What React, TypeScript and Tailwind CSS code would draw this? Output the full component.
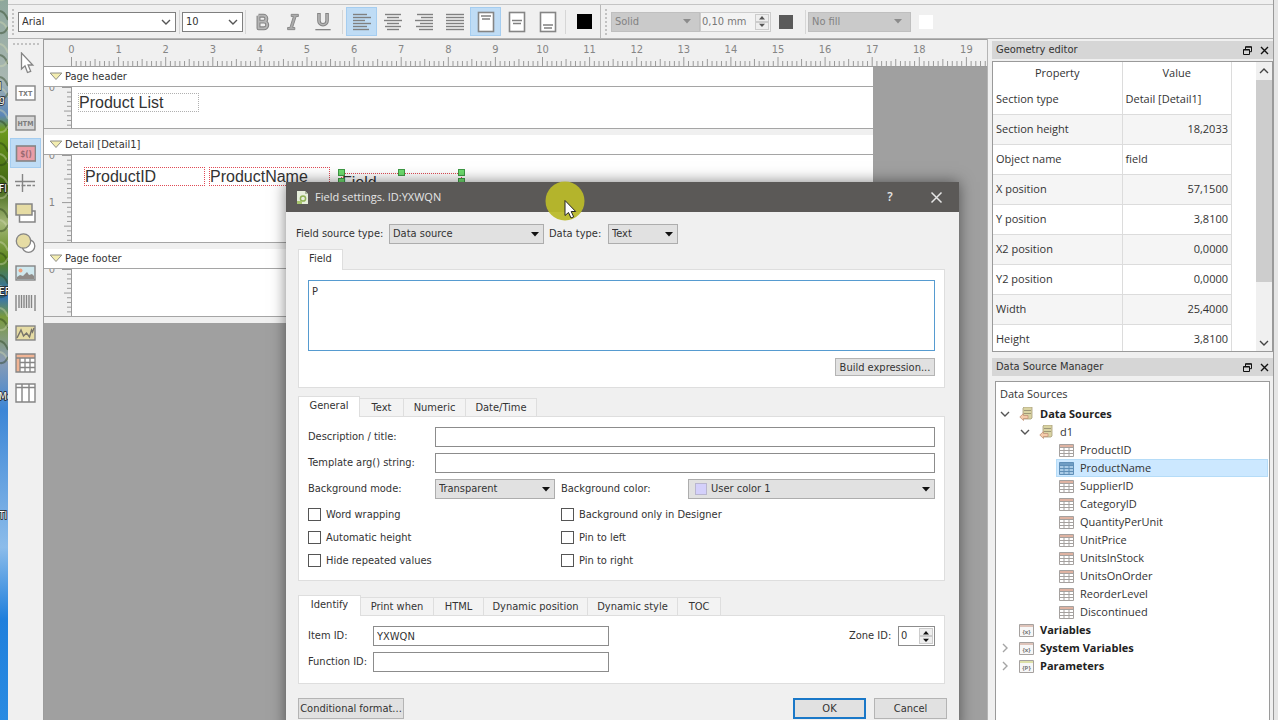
import React, { useState } from 'react';
import { clsx } from 'clsx';

const CM = 47.1;

/* ---------- shared bits ---------- */

function Arrow({ className }: { className?: string }) {
  return (
    <svg viewBox="0 0 8 5" className={clsx('w-2 h-[5px]', className)} fill="currentColor">
      <path d="M0 0h8L4 4.6z" />
    </svg>
  );
}

function Chevron({ className }: { className?: string }) {
  return (
    <svg viewBox="0 0 10 6" className={clsx('w-[10px] h-[6px]', className)} fill="none" stroke="currentColor" strokeWidth="1.4">
      <path d="M1 1l4 4 4-4" />
    </svg>
  );
}

interface SelectBoxProps {
  id?: string;
  label?: string;
  value: string;
  className?: string;
  tone?: 'button' | 'edit' | 'disabled';
  swatch?: boolean;
}

function SelectBox({ id, label, value, className, tone = 'button', swatch }: SelectBoxProps) {
  return (
    <div className={clsx('grid items-center h-5', className)}>
      <select
        id={id}
        aria-label={label}
        disabled={tone === 'disabled'}
        className={clsx(
          'col-start-1 row-start-1 w-full h-full appearance-none border rounded-none outline-none opacity-100',
          swatch ? 'pl-[22px]' : 'pl-[3px]',
          tone === 'button' && 'bg-[#e1e1e1] border-[#adadad]',
          tone === 'edit' && 'bg-white border-[#7f7f7f]',
          tone === 'disabled' && 'bg-[#cacaca] border-[#bfbfbf] text-[#828282]'
        )}
      >
        <option>{value}</option>
      </select>
      {swatch && <span className="col-start-1 row-start-1 ml-[7px] w-3 h-3 bg-[#d4d0fb] border border-[#b9b6cf] pointer-events-none" />}
      <span className="col-start-1 row-start-1 justify-self-end mr-[5px] pointer-events-none">
        {tone === 'edit' ? <Chevron className="text-[#555]" /> : <Arrow className={tone === 'disabled' ? 'mr-1 text-[#8b8b8b]' : 'text-[#111]'} />}
      </span>
    </div>
  );
}

function SpinButtons({ disabled }: { disabled?: boolean }) {
  return (
    <div className={clsx('flex flex-col w-[14px] m-px', disabled ? 'text-[#555]' : 'text-[#111]')}>
      <button aria-label="Increase" className="flex-1 flex items-center justify-center bg-[#eee] border border-[#ccc]">
        <Arrow className="w-[6px] h-1 rotate-180" />
      </button>
      <button aria-label="Decrease" className="flex-1 flex items-center justify-center bg-[#eee] border border-[#ccc]">
        <Arrow className="w-[6px] h-1" />
      </button>
    </div>
  );
}

/* ---------- top toolbar ---------- */

function Separator() {
  return <span className="w-px h-6 bg-[#d6d6d6] shrink-0" />;
}

function Lines({ rows }: { rows: number[][] }) {
  return (
    <svg viewBox="0 0 18 18" className="w-[18px] h-[18px]" stroke="#808080" strokeWidth="1.4">
      {rows.map(([a, b], i) => (
        <line key={i} x1={a} x2={b} y1={1.5 + i * 3} y2={1.5 + i * 3} />
      ))}
    </svg>
  );
}

function PageAlign({ y }: { y: number }) {
  return (
    <svg viewBox="0 0 18 22" className="w-[18px] h-[22px]">
      <rect x="1.5" y="1.5" width="15" height="19" fill="#fff" stroke="#858585" strokeWidth="1.6" />
      <path d={`M4 ${y}h10M5 ${y + 3}h8`} stroke="#808080" strokeWidth="1.3" />
    </svg>
  );
}

function ToolButton({ label, active, children }: { label: string; active?: boolean; children: React.ReactNode }) {
  return (
    <button
      aria-label={label}
      aria-pressed={!!active}
      className={clsx('min-w-[30px] h-[29px] px-[5px] flex items-center justify-center border', active ? 'bg-[#bfdcf5] border-[#a5cdf0]' : 'border-transparent')}
    >
      {children}
    </button>
  );
}

function Glyph({ d }: { d: string }) {
  return (
    <svg viewBox="0 0 20 22" className="w-[18px] h-[22px]" fill="none" strokeLinejoin="round">
      <path d={d} stroke="#858585" strokeWidth="4.4" />
      <path d={d} stroke="#b5b5b5" strokeWidth="2" />
    </svg>
  );
}

function Handle() {
  return <span className="w-0 h-[26px] border-l-2 border-dotted border-[#c2c2c2] shrink-0" />;
}

function Toolbar() {
  return (
    <div className="h-[34px] shrink-0 flex items-center bg-[#f0f0f0] border-b border-[#b4b4b4] pl-1">
      <Handle />
      <SelectBox label="Font" value="Arial" tone="edit" className="ml-1 w-[158px]" />
      <span className="w-[3px]" />
      <Separator />
      <SelectBox label="Font size" value="10" tone="edit" className="ml-[2px] w-[61px]" />
      <span className="w-[2px]" />
      <Separator />
      <span className="w-[2px]" />
      <ToolButton label="Bold">
        <Glyph d="M5 4v14h6a3.6 3.6 0 0 0 0-7.4H5M5 4h5.4a3.3 3.3 0 0 1 0 6.6" />
      </ToolButton>
      <ToolButton label="Italic">
        <svg viewBox="0 0 20 22" className="w-[18px] h-[22px]" fill="#ababab" stroke="#858585">
          <path d="M8 2.5h8v2.4h-2.5L9.6 17.1H12v2.4H4v-2.4h2.6l3.8-12.2H8z" />
        </svg>
      </ToolButton>
      <ToolButton label="Underline">
        <svg viewBox="0 0 20 22" className="w-[18px] h-[22px]" fill="none">
          <path d="M5.5 1v8.500a4.500 4.500 0 0 0 9 0V1" stroke="#858585" strokeWidth="4" />
          <path d="M5.500 2v7.500a4.500 4.500 0 0 0 9 0V2" stroke="#b5b5b5" strokeWidth="1.800" />
          <path d="M1.500 19.500h17" stroke="#858585" strokeWidth="1.500" />
        </svg>
      </ToolButton>
      <span className="w-1" />
      <Separator />
      <span className="w-[3px]" />
      <div className="grid grid-cols-[repeat(7,31px)]">
        <ToolButton label="Align left" active>
          <Lines rows={[[0, 14], [0, 18], [0, 12], [0, 18], [0, 14], [0, 16]]} />
        </ToolButton>
        <ToolButton label="Align center">
          <Lines rows={[[1, 17], [3, 15], [0, 18], [3, 15], [1, 17], [3, 15]]} />
        </ToolButton>
        <ToolButton label="Align right">
          <Lines rows={[[2, 18], [6, 18], [0, 18], [5, 18], [1, 18], [4, 18]]} />
        </ToolButton>
        <ToolButton label="Justify">
          <Lines rows={[[0, 18], [0, 18], [0, 18], [0, 18], [0, 18], [0, 18]]} />
        </ToolButton>
        <ToolButton label="Align top" active>
          <PageAlign y={5} />
        </ToolButton>
        <ToolButton label="Align middle">
          <PageAlign y={9.5} />
        </ToolButton>
        <ToolButton label="Align bottom">
          <PageAlign y={14} />
        </ToolButton>
      </div>
      <span className="w-[2px]" />
      <Separator />
      <button aria-label="Text color" className="ml-[11px] w-[15px] h-[15px] bg-black" />
      <span className="ml-2 w-px h-full bg-[#b9b9b9]" />
      <span className="w-1" />
      <Handle />
      <SelectBox label="Line style" value="Solid" tone="disabled" className="ml-1 w-[89px]" />
      <div className="flex w-[71px] h-5 bg-[#f3f3f3] border border-[#ccc]">
        <input aria-label="Line width" disabled defaultValue="0,10 mm" className="min-w-0 flex-1 pl-px text-[#777]" />
        <SpinButtons disabled />
      </div>
      <button aria-label="Line color" className="ml-2 w-[14px] h-[14px] bg-[#5a5a5a]" />
      <span className="w-3" />
      <Separator />
      <SelectBox label="Fill style" value="No fill" tone="disabled" className="ml-[2px] w-[103px]" />
      <button aria-label="Fill color" className="ml-2 w-[14px] h-[14px] bg-white" />
    </div>
  );
}

/* ---------- left tool strip ---------- */

const G = '#858585';

const TOOLS: { name: string; icon: React.ReactNode }[] = [
  { name: 'Select', icon: <path d="M6.500 1v16l3.500-3.200 2.500 6.700 3.200-1.200-2.600-6.300h4.700z" fill="#fff" stroke={G} strokeWidth="1.300" /> },
  {
    name: 'Text',
    icon: (
      <>
        <rect x="1" y="4" width="19" height="14" fill="#fff" stroke={G} strokeWidth="1.4" />
        <text x="10.500" y="14" textAnchor="middle" fontSize="7" fontWeight="bold" fill="#7b7b7b">TXT</text>
      </>
    ),
  },
  {
    name: 'HTML',
    icon: (
      <>
        <rect x="1" y="4" width="19" height="14" fill="#d6d6d6" stroke={G} strokeWidth="1.4" />
        <text x="10.500" y="14" textAnchor="middle" fontSize="7" fontWeight="bold" fill="#7b7b7b">HTM</text>
      </>
    ),
  },
  {
    name: 'Field',
    icon: (
      <>
        <rect x="1.500" y="4" width="19" height="15" fill="#ea9ca6" stroke={G} strokeWidth="1.6" />
        <text x="11" y="14.500" textAnchor="middle" fontSize="8" fontWeight="bold" fill="#9a6a72">$()</text>
      </>
    ),
  },
  {
    name: 'Line',
    icon: (
      <g stroke={G} strokeWidth="1.4">
        <path d="M7.500 2v18M0 9.500h20" />
        <path d="M1 13.500h19" strokeDasharray="4 1.500" />
      </g>
    ),
  },
  {
    name: 'Rectangle',
    icon: (
      <g stroke={G} strokeWidth="1.5">
        <rect x="4.500" y="9" width="15.500" height="11" fill="#fff" />
        <rect x="1" y="2" width="16" height="11" fill="#e6dca4" />
      </g>
    ),
  },
  {
    name: 'Ellipse',
    icon: (
      <g stroke={G} strokeWidth="1.3">
        <circle cx="13.500" cy="14" r="6.300" fill="#fff" />
        <circle cx="8.500" cy="9" r="7.200" fill="#e6dca4" />
      </g>
    ),
  },
  {
    name: 'Picture',
    icon: (
      <>
        <rect x="1" y="4" width="19" height="14" fill="#cfe8ee" stroke={G} strokeWidth="1.4" />
        <circle cx="5.500" cy="8.500" r="2" fill="#f0a07c" />
        <path d="M2 17v-2l3-2 3 1 4-4 2 3 3-1 2 2v3z" fill="#8f8b88" />
      </>
    ),
  },
  {
    name: 'Barcode',
    icon: <path d="M1 3v16M4 3v13M6.500 3v13M9 3v13M11.500 3v13M14 3v13M16.500 3v13M20 3v16" stroke={G} strokeWidth="1.4" />,
  },
  {
    name: 'Chart',
    icon: (
      <>
        <rect x="1" y="4" width="19" height="14" fill="#e6dca4" stroke={G} strokeWidth="1.4" />
        <path d="M2 16l4-8 2.500 6 3-3 3 4 2-7 1 2 1.500-4" fill="none" stroke="#77736a" strokeWidth="1.4" />
      </>
    ),
  },
  {
    name: 'Table',
    icon: (
      <>
        <rect x="1" y="2" width="19" height="18" fill="#fff" />
        <path d="M1 2h19v4H1zM1 6h4v14H1z" fill="#f1b494" />
        <path d="M1 2h19v18H1zM1 6h19M5 6v14M10 6v14M15 6v14M5 10.500h15M5 15.500h15" fill="none" stroke={G} strokeWidth="1.300" />
      </>
    ),
  },
  {
    name: 'Columns',
    icon: <path d="M1 2h19v18H1zM1 5.500h19M7 2v18M14 2v18" fill="#fff" stroke={G} strokeWidth="1.4" />,
  },
];

function ToolStrip() {
  return (
    <div className="w-[35px] shrink-0 bg-[#f0f0f0] pt-1 flex flex-col items-center">
      <span className="w-[26px] border-t-2 border-dotted border-[#c2c2c2] mb-[3px]" />
      {TOOLS.map((tool) => (
        <button
          key={tool.name}
          aria-label={tool.name}
          className={clsx('w-[31px] h-[30px] flex items-center justify-center border', tool.name === 'Field' ? 'bg-[#bfdcf5] border-[#a5cdf0]' : 'border-transparent')}
        >
          <svg viewBox="0 0 21 22" className="w-[21px] h-[22px]">{tool.icon}</svg>
        </button>
      ))}
    </div>
  );
}

/* ---------- report canvas ---------- */

function HorizontalRuler() {
  const ticks = Array.from({ length: 195 }, (_, i) => i);
  return (
    <svg className="block w-full h-[27px] shrink-0 bg-[#f0f0f0] border-b border-[#9c9c9c]">
      {ticks.map((i) => {
        const len = i % 10 === 0 ? 9 : i % 5 === 0 ? 7 : 5;
        const x = 27.5 + (i * CM) / 10;
        return <line key={i} x1={x} x2={x} y1={26 - len} y2={26} stroke="#9a9a9a" />;
      })}
      {ticks.filter((i) => i % 10 === 0).map((i) => (
        <text key={i} x={27.5 + (i * CM) / 10} y="13" textAnchor="middle" fontSize="11" fill="#858585">{i / 10}</text>
      ))}
    </svg>
  );
}

function VerticalRuler({ mm }: { mm: number }) {
  return (
    <svg className="w-7 h-full shrink-0 bg-[#f0f0f0] border-r border-[#9a9a9a]">
      {Array.from({ length: mm }, (_, i) => {
        const len = i % 10 === 0 ? 9 : i % 5 === 0 ? 7 : 4;
        const y = 0.5 + (i * CM) / 10;
        return <line key={i} x1={27 - len} x2={27} y1={y} y2={y} stroke="#9a9a9a" />;
      })}
      <text x="8" y="4" textAnchor="middle" fontSize="11" fill="#858585">0</text>
      {mm > 10 && <text x="8" y="51" textAnchor="middle" fontSize="11" fill="#858585">1</text>}
    </svg>
  );
}

interface SectionProps {
  title: string;
  mm: number;
  bodyClass: string;
  children?: React.ReactNode;
}

function Section({ title, mm, bodyClass, children }: SectionProps) {
  return (
    <section className="w-[829px] border-b-[6px] border-[#f0f0f0]">
      <h2 className="h-5 flex items-center gap-[2px] pl-[5px] bg-white border-b border-[#a5a5a5] font-normal">
        <svg viewBox="0 0 14 9" className="w-[14px] h-[9px]">
          <path d="M1.200 1h11.600L7 7.500z" fill="#f3edb0" stroke="#8f8f88" />
        </svg>
        {title}
      </h2>
      <div className={clsx('flex bg-white border-b border-[#a5a5a5]', bodyClass)}>
        <VerticalRuler mm={mm} />
        <div className="relative flex-1 font-['Liberation_Sans',Arial,sans-serif] text-base leading-[18px] text-[#333]">{children}</div>
      </div>
    </section>
  );
}

const HANDLES = ['left-[266px] top-[14px]', 'left-[326px] top-[14px]', 'left-[386px] top-[14px]', 'left-[266px] top-[23px]', 'left-[386px] top-[23px]'];

function Canvas() {
  return (
    <main className="flex-1 min-w-0 flex flex-col bg-[#a0a0a0] border-l border-t border-[#9c9c9c]">
      <HorizontalRuler />
      <Section title="Page header" mm={9} bodyClass="h-[42px]">
        <div className="absolute left-[6px] top-[6px] w-[121px] h-[19px] border border-dotted border-[#b0b0b0]">Product List</div>
      </Section>
      <Section title="Detail [Detail1]" mm={19} bodyClass="h-[88px]">
        <div className="absolute left-3 top-3 w-[121px] h-[19px] border border-dotted border-[#e04a55]">ProductID</div>
        <div className="absolute left-[137px] top-3 w-[121px] h-[19px] border border-dotted border-[#e04a55]">ProductName</div>
        <div className="absolute left-[269px] top-[18px] w-[121px] h-[19px] border border-dotted border-[#e04a55]">Field</div>
        {HANDLES.map((pos) => (
          <span key={pos} className={clsx('absolute w-[7px] h-[7px] bg-[#6ddc6d] border border-[#3f9a45]', pos)} />
        ))}
      </Section>
      <Section title="Page footer" mm={10} bodyClass="h-12" />
    </main>
  );
}

/* ---------- right docks ---------- */

function DockHeader({ title }: { title: string }) {
  return (
    <h2 className="h-[18px] shrink-0 flex items-center bg-[#d6d6d6] pl-1 pr-1 font-normal font-['DejaVu_Sans_Condensed','DejaVu_Sans',sans-serif] text-[#333]">
      <span className="flex-1">{title}</span>
      <button aria-label={`Float ${title}`} className="mr-2">
        <svg viewBox="0 0 9 9" className="w-[9px] h-[9px]" fill="none" stroke="#111">
          <path d="M2.500 3V.7h6v5H6.500M2.500 1.200h6M.5 3.500h6v5h-6zM.5 4h6" />
        </svg>
      </button>
      <button aria-label={`Close ${title}`}>
        <svg viewBox="0 0 9 9" className="w-[9px] h-[9px]" stroke="#111" strokeWidth="1.4">
          <path d="M1 1l7 7M8 1L1 8" />
        </svg>
      </button>
    </h2>
  );
}

const GEOMETRY = [
  { name: 'Section type', value: 'Detail [Detail1]', text: true },
  { name: 'Section height', value: '18,2033' },
  { name: 'Object name', value: 'field', text: true },
  { name: 'X position', value: '57,1500' },
  { name: 'Y position', value: '3,8100' },
  { name: 'X2 position', value: '0,0000' },
  { name: 'Y2 position', value: '0,0000' },
  { name: 'Width', value: '25,4000' },
  { name: 'Height', value: '3,8100' },
];

function GeometryEditor() {
  return (
    <section className="mb-[6px]">
      <DockHeader title="Geometry editor" />
      <div className="mt-[2px] h-[291px] flex bg-white border border-[#9a9a9a] overflow-hidden">
        <table className="w-[239px] h-fit border-collapse text-[#333]">
          <thead>
            <tr className="h-[22px]">
              <th className="w-[129px] font-normal border-r border-[#dcdcdc]">Property</th>
              <th className="font-normal border-r border-[#dcdcdc]">Value</th>
            </tr>
          </thead>
          <tbody>
            {GEOMETRY.map((row, i) => (
              <tr key={row.name} className={clsx('h-[30px] border-b border-[#dcdcdc]', i % 2 === 1 && 'bg-[#f5f5f5]')}>
                <td className="pl-[3px] border-r border-[#dcdcdc]">{row.name}</td>
                <td className={clsx('px-[3px] border-r border-[#dcdcdc]', !row.text && 'text-right')}>{row.value}</td>
              </tr>
            ))}
          </tbody>
        </table>
        <div className="ml-auto w-4 bg-[#f0f0f0] flex flex-col items-center">
          <Chevron className="my-[6px] rotate-180 shrink-0 text-[#444]" />
          <span className="w-full h-[202px] bg-[#cdcdcd]" />
          <Chevron className="mt-auto mb-[5px] text-[#444]" />
        </div>
      </div>
    </section>
  );
}

interface TreeNode {
  label: string;
  level: 0 | 1 | 2;
  icon: 'source' | 'table' | 'var' | 'param';
  open?: boolean;
  closed?: boolean;
}

const FIELDS = ['ProductID', 'ProductName', 'SupplierID', 'CategoryID', 'QuantityPerUnit', 'UnitPrice', 'UnitsInStock', 'UnitsOnOrder', 'ReorderLevel', 'Discontinued'];

const TREE: TreeNode[] = [
  { label: 'Data Sources', level: 0, icon: 'source', open: true },
  { label: 'd1', level: 1, icon: 'source', open: true },
  ...FIELDS.map((label): TreeNode => ({ label, level: 2, icon: 'table' })),
  { label: 'Variables', level: 0, icon: 'var' },
  { label: 'System Variables', level: 0, icon: 'var', closed: true },
  { label: 'Parameters', level: 0, icon: 'param', closed: true },
];

const INDENT = ['pl-1', 'pl-6', 'pl-11'];

function TreeIcon({ kind, selected }: { kind: TreeNode['icon']; selected: boolean }) {
  if (kind === 'source') {
    return (
      <svg viewBox="0 0 15 14" className="w-[15px] h-[14px]">
        <path d="M4 1l1-1h8v11l-1 1H4z" fill="#d9d3a2" stroke="#a8a07c" strokeWidth=".8" />
        <path d="M5 3.500h7M5 6.500h7" stroke="#9d9878" />
        <path d="M.8 10l3.700-3.500v2H9v3H4.500v2z" fill="#f5cbab" stroke="#c29578" strokeWidth=".8" />
      </svg>
    );
  }
  if (kind === 'table') {
    return (
      <svg viewBox="0 0 15 13" className="w-[15px] h-[13px]">
        <rect x=".5" y=".5" width="14" height="12" fill={selected ? '#a9cbe6' : '#fff'} />
        <rect x=".5" y=".5" width="14" height="3" fill={selected ? '#6f9dc4' : '#dfb3a2'} />
        <path d="M.5.5h14v12H.5zM.5 3.500h14M.5 6.500h14M.5 9.500h14M5 3.500v9M10 3.500v9" fill="none" stroke={selected ? '#5f8fb8' : '#a5a19f'} />
      </svg>
    );
  }
  return (
    <svg viewBox="0 0 15 13" className="w-[15px] h-[13px]">
      <path d="M.5.5h14v12H.5z" fill="#f7f7f7" stroke="#a5a19f" />
      <path d="M1 1h13v2H1z" fill={kind === 'param' ? '#dde0a8' : '#dfc4ba'} />
      <text x="7.500" y="10" textAnchor="middle" fontSize="6" fill="#777">{kind === 'param' ? '{P}' : '{x}'}</text>
    </svg>
  );
}

function DataSourceManager() {
  const [selected, setSelected] = useState('ProductName');
  return (
    <section className="flex-1 min-h-0 flex flex-col">
      <DockHeader title="Data Source Manager" />
      <div className="flex-1 mt-[5px] ml-[3px] mr-[3px] bg-white border-x border-t border-[#9a9a9a] text-[#333]">
        <h3 className="h-[23px] flex items-center pl-1 font-normal">Data Sources</h3>
        <ul>
          {TREE.map((node) => (
            <li key={node.label + node.level} className={clsx('h-[18px] flex', INDENT[node.level])}>
              <span className="w-4 flex items-center text-[#555]">
                {node.open && <Chevron />}
                {node.closed && <Chevron className="-rotate-90 text-[#a5a5a5]" />}
              </span>
              <button
                onClick={() => setSelected(node.label)}
                className={clsx(
                  'flex-1 flex items-center gap-[6px] pl-[2px] mr-px border',
                  node.level === 0 && 'font-bold text-[#222]',
                  node.label === selected ? 'bg-[#cce8ff] border-[#b5dcf8]' : 'border-transparent'
                )}
              >
                <TreeIcon kind={node.icon} selected={node.label === selected} />
                {node.label}
              </button>
            </li>
          ))}
        </ul>
      </div>
    </section>
  );
}

/* ---------- field settings dialog ---------- */

function TabBar({ label, tabs }: { label: string; tabs: { name: string; width: string }[] }) {
  return (
    <div role="tablist" aria-label={label} className="flex items-end h-5">
      {tabs.map((tab, i) => (
        <button
          key={tab.name}
          role="tab"
          aria-selected={i === 0}
          className={clsx(
            'text-center border-[#dedede] border-t border-r',
            tab.width,
            i === 0 ? 'h-[21px] -mb-px pb-[2px] bg-white border-l z-10' : 'h-[18px] bg-[#f3f3f3]'
          )}
        >
          {tab.name}
        </button>
      ))}
    </div>
  );
}

function Check({ label }: { label: string }) {
  return (
    <label className="h-[23px] flex items-center gap-[5px]">
      <input type="checkbox" className="appearance-none w-[13px] h-[13px] bg-white border border-[#555]" />
      {label}
    </label>
  );
}

const INPUT = 'min-w-0 h-5 bg-white border border-[#8c8c8c] px-[3px] outline-none';
const BUTTON = 'bg-[#e1e1e1] border border-[#b4b4b4] text-center';
const PANEL = 'bg-white border border-[#dedede]';

function FieldSettings() {
  return (
    <div
      role="dialog"
      aria-label="Field settings"
      className="absolute left-[286px] top-[182px] w-[673px] bg-[#f0f0f0] shadow-[0_0_14px_rgba(0,0,0,0.5)] text-[#333]"
    >
      <header className="h-[30px] flex items-center bg-[#5b5957] text-[#e6e6e6] font-['Open_Sans',sans-serif] pl-[11px] pr-4">
        <svg viewBox="0 0 11 13" className="w-[11px] h-[13px] mr-[7px]">
          <path d="M0 0h8l3 3v10H0z" fill="#e6eedb" />
          <path d="M8 0v3h3z" fill="#a9b79a" />
          <circle cx="6" cy="7.500" r="2.600" fill="none" stroke="#8fb254" strokeWidth="1.500" />
          <path d="M0 10h5v3H0z" fill="#a8c66f" />
        </svg>
        <span className="flex-1">Field settings. ID:YXWQN</span>
        <button aria-label="Help" className="w-3 mr-[34px] text-xs font-semibold">?</button>
        <button aria-label="Close">
          <svg viewBox="0 0 13 13" className="w-[13px] h-[13px]" stroke="#e6e6e6" strokeWidth="1.500">
            <path d="M1.500 1.500l10 10M11.500 1.500l-10 10" />
          </svg>
        </button>
      </header>

      <div className="pt-3 px-[10px] flex items-center">
        <label htmlFor="source-type" className="w-[93px]">Field source type:</label>
        <SelectBox id="source-type" value="Data source" className="w-[155px]" />
        <label htmlFor="data-type" className="ml-[5px] w-[59px]">Data type:</label>
        <SelectBox id="data-type" value="Text" className="w-[70px]" />
      </div>

      <div className="pl-3 pr-[14px] pt-[5px]">
        <TabBar label="Field" tabs={[{ name: 'Field', width: 'w-[45px]' }]} />
        <div className={clsx(PANEL, 'h-[119px] pt-[10px] px-[9px] flex flex-col items-end')}>
          <textarea aria-label="Field expression" defaultValue="P" className="w-full h-[71px] resize-none border border-[#569bd0] bg-white px-[3px] py-[3px] leading-4 outline-none" />
          <button className={clsx(BUTTON, 'mt-[7px] w-[100px] h-[18px] leading-none')}>Build expression...</button>
        </div>

        <div className="mt-2">
          <TabBar
            label="Formatting"
            tabs={[
              { name: 'General', width: 'w-[62px]' },
              { name: 'Text', width: 'w-11' },
              { name: 'Numeric', width: 'w-[62px]' },
              { name: 'Date/Time', width: 'w-[71px]' },
            ]}
          />
          <div className={clsx(PANEL, 'h-[165px] pt-[10px] px-[9px]')}>
            <div className="grid grid-cols-[127px_120px_133px_1fr] gap-y-[6px] items-center">
              <label htmlFor="description">Description / title:</label>
              <input id="description" className={clsx(INPUT, 'col-span-3')} />
              <label htmlFor="template">Template arg() string:</label>
              <input id="template" className={clsx(INPUT, 'col-span-3')} />
              <label htmlFor="bg-mode">Background mode:</label>
              <SelectBox id="bg-mode" value="Transparent" />
              <label htmlFor="bg-color" className="pl-[6px]">Background color:</label>
              <SelectBox id="bg-color" value="User color 1" swatch />
            </div>
            <div className="mt-1 grid grid-cols-[253px_1fr]">
              <Check label="Word wrapping" />
              <Check label="Background only in Designer" />
              <Check label="Automatic height" />
              <Check label="Pin to left" />
              <Check label="Hide repeated values" />
              <Check label="Pin to right" />
            </div>
          </div>
        </div>

        <div className="mt-[14px]">
          <TabBar
            label="Item options"
            tabs={[
              { name: 'Identify', width: 'w-[63px]' },
              { name: 'Print when', width: 'w-[73px]' },
              { name: 'HTML', width: 'w-[50px]' },
              { name: 'Dynamic position', width: 'w-[104px]' },
              { name: 'Dynamic style', width: 'w-[90px]' },
              { name: 'TOC', width: 'w-[43px]' },
            ]}
          />
          <div className={clsx(PANEL, 'h-[69px] pt-[10px] px-[9px]')}>
            <div className="grid grid-cols-[65px_236px_1fr_49px_37px] gap-y-[6px] items-center">
              <label htmlFor="item-id">Item ID:</label>
              <input id="item-id" defaultValue="YXWQN" className={INPUT} />
              <label htmlFor="zone-id" className="col-start-4">Zone ID:</label>
              <div className="flex h-5 border border-[#8c8c8c]">
                <input id="zone-id" defaultValue="0" className="min-w-0 flex-1 pl-[2px] outline-none" />
                <SpinButtons />
              </div>
              <label htmlFor="function-id">Function ID:</label>
              <input id="function-id" className={INPUT} />
            </div>
          </div>
        </div>
      </div>

      <footer className="pt-[14px] pb-3 px-3 flex gap-2">
        <button className={clsx(BUTTON, 'w-[106px] h-[21px] mr-auto')}>Conditional format...</button>
        <button className="w-[73px] h-[21px] leading-none bg-[#e1e1e1] border-2 border-[#1a78c8]">OK</button>
        <button className={clsx(BUTTON, 'w-[73px] h-[21px]')}>Cancel</button>
      </footer>
    </div>
  );
}

/* ---------- desktop behind the window ---------- */

function Wallpaper() {
  const words: [string, number][] = [['l', 90], ['g', 103], ['Fl', 192], ['EF', 295], ['Mo', 400], ['Tl', 519]];
  return (
    <svg className="w-2 h-full shrink-0" viewBox="0 0 8 720" preserveAspectRatio="none">
      <defs>
        <linearGradient id="sky" x1="0" y1="0" x2="0" y2="1">
          <stop offset="0" stopColor="#8ea79c" />
          <stop offset=".11" stopColor="#a9b7b2" />
          <stop offset=".16" stopColor="#5b86b8" />
          <stop offset=".18" stopColor="#6d9a1c" />
          <stop offset=".26" stopColor="#3f6414" />
          <stop offset=".31" stopColor="#a4b878" />
          <stop offset=".36" stopColor="#5c851c" />
          <stop offset=".41" stopColor="#2d6fbb" />
          <stop offset=".44" stopColor="#7a9a3c" />
          <stop offset=".5" stopColor="#8a9cb4" />
          <stop offset=".57" stopColor="#3c86d6" />
          <stop offset=".76" stopColor="#8cbcea" />
          <stop offset=".86" stopColor="#1f7fdc" />
          <stop offset="1" stopColor="#2a8be2" />
        </linearGradient>
      </defs>
      <rect width="8" height="720" fill="url(#sky)" />
      {Array.from({ length: 34 }, (_, i) => (
        <path key={i} d={`M0 ${i * 11}q5 1 8 ${i % 3 === 0 ? -6 : 9}`} fill="none" stroke={i % 2 ? '#1f3512' : '#d5dcb4'} strokeWidth="2" opacity=".4" />
      ))}
      {words.map(([word, y]) => (
        <text key={y} x="-1" y={y} fontSize="10" fill="#fff" stroke="#222" strokeWidth="1.500" paintOrder="stroke">{word}</text>
      ))}
    </svg>
  );
}

export default function App() {
  return (
    <div className="relative h-screen overflow-hidden flex bg-[#f0f0f0] font-['DejaVu_Sans_Condensed','DejaVu_Sans',Tahoma,sans-serif] text-[11px] leading-4 text-[#333]">
      <Wallpaper />
      <div className="flex-1 min-w-0 flex flex-col border-r border-[#9a9a9a]">
        <div className="h-[5px] shrink-0 border-b border-[#c4c4c4]" />
        <Toolbar />
        <div className="flex-1 min-h-0 flex">
          <ToolStrip />
          <Canvas />
          <aside className="w-[286px] shrink-0 flex flex-col pt-[2px] pl-1 border-l border-[#b4b4b4] font-['Open_Sans',sans-serif]">
            <GeometryEditor />
            <DataSourceManager />
          </aside>
        </div>
      </div>
      <div className="w-[6px] shrink-0 flex flex-col border-r-2 border-white bg-[#e6e6e6]" />

      <FieldSettings />

      {/* pointer with click highlight */}
      <svg viewBox="0 0 40 40" className="absolute left-[545px] top-[181px] w-10 h-10 pointer-events-none">
        <circle cx="20" cy="20" r="19.500" fill="#b9b92a" opacity=".95" />
        <path d="M20 19.500v15l3.500-3 2.500 5.500 2.700-1.200-2.500-5.300h4.500z" fill="#fff" stroke="#222" />
      </svg>
    </div>
  );
}
